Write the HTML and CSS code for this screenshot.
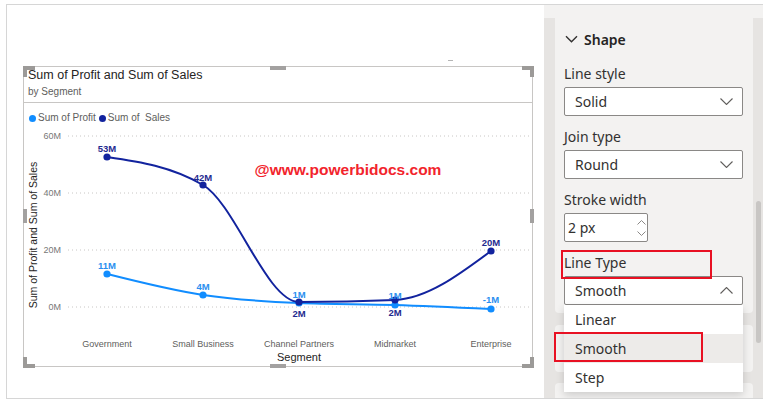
FILE: index.html
```html
<!DOCTYPE html>
<html>
<head>
<meta charset="utf-8">
<title>Line chart format</title>
<link rel="stylesheet" href="styles.css">
</head>
<body>
<div class="frame">
  <div class="canvas">
    <div class="visual">
      <span class="tick-mark"></span>
      <div class="vheader">
        <div class="vtitle">Sum of Profit and Sum of Sales</div>
        <div class="vsub">by Segment</div>
      </div>
      <div class="legend">
        <span class="lg-item"><span class="dot profit"></span>Sum of Profit</span>
        <span class="lg-item"><span class="dot sales"></span>Sum of&nbsp; Sales</span>
      </div>
      <svg class="chart" viewBox="24 125 508 241" width="508" height="241">
        <g class="grid">
          <line x1="68" x2="529" y1="136" y2="136"/>
          <line x1="68" x2="529" y1="193" y2="193"/>
          <line x1="68" x2="529" y1="250" y2="250"/>
          <line x1="68" x2="529" y1="307" y2="307"/>
        </g>
        <g class="ylab">
          <text x="61" y="139">60M</text>
          <text x="61" y="196">40M</text>
          <text x="61" y="253">20M</text>
          <text x="61" y="310">0M</text>
        </g>
        <g class="xlab">
          <text x="107" y="347">Government</text>
          <text x="203" y="347">Small Business</text>
          <text x="299" y="347">Channel Partners</text>
          <text x="395" y="347">Midmarket</text>
          <text x="491" y="347">Enterprise</text>
        </g>
        <text class="ytitle" transform="translate(36.5 235) rotate(-90)">Sum of Profit and Sum of Sales</text>
        <text class="xtitle" x="299" y="361">Segment</text>
        <text class="wm" x="348" y="175">@www.powerbidocs.com</text>

        <path class="ln-profit" d="M107,274 C139,282.08 171,290.17 203,295 C235,299.83 267,301.67 299,303 C331,304.33 363,304 395,305 C427,306 459,307.5 491,309"/>
        <g class="pt-profit">
          <circle cx="107" cy="274" r="3.6"/>
          <circle cx="203" cy="295" r="3.6"/>
          <circle cx="299" cy="303" r="3.6"/>
          <circle cx="395" cy="305" r="3.6"/>
          <circle cx="491" cy="309" r="3.6"/>
        </g>
        <path class="ln-sales" d="M107,157 C139,161.67 171,166.33 203,185 C235,203.67 267,302 299,302 C331,302 363,301.33 395,300 C427,298.67 459,274.83 491,251"/>
        <g class="pt-sales">
          <circle cx="107" cy="157" r="3.6"/>
          <circle cx="203" cy="185" r="3.6"/>
          <circle cx="299" cy="302" r="3.6"/>
          <circle cx="395" cy="300" r="3.6"/>
          <circle cx="491" cy="251" r="3.6"/>
        </g>
        <g class="lb-sales">
          <text x="107" y="152">53M</text>
          <text x="203" y="181">42M</text>
          <text x="299" y="317">2M</text>
          <text x="395" y="316">2M</text>
          <text x="491" y="246">20M</text>
        </g>
        <g class="lb-profit">
          <text x="107" y="269">11M</text>
          <text x="203" y="290">4M</text>
          <text x="299" y="298">1M</text>
          <text x="395" y="299">1M</text>
          <text x="491" y="303">-1M</text>
        </g>
      </svg>
      <span class="hc h-tl"></span>
      <span class="hc h-tr"></span>
      <span class="hc h-bl"></span>
      <span class="hc h-br"></span>
      <span class="hd h-t"></span>
      <span class="hd h-b"></span>
      <span class="hd h-l"></span>
      <span class="hd h-r"></span>
    </div>
  </div>

  <div class="pane">
    <div class="pane-top"></div>
    <div class="pane-body">
      <div class="cards">
        <div class="card card-first">
          <div class="sec-head">
            <svg class="chev" width="13" height="8" viewBox="0 0 13 8"><path d="M1 1.2 L6.5 6.7 L12 1.2"/></svg>
            <span>Shape</span>
          </div>
          <div class="field">
            <div class="flabel">Line style</div>
            <div class="select"><span>Solid</span><svg class="sel-chev" width="13" height="7" viewBox="0 0 13 7"><path d="M0.5 0.5 L6.5 6.5 L12.5 0.5"/></svg></div>
          </div>
          <div class="field">
            <div class="flabel">Join type</div>
            <div class="select"><span>Round</span><svg class="sel-chev" width="13" height="7" viewBox="0 0 13 7"><path d="M0.5 0.5 L6.5 6.5 L12.5 0.5"/></svg></div>
          </div>
          <div class="field">
            <div class="flabel">Stroke width</div>
            <div class="spin"><span>2 px</span>
              <span class="spin-btns">
                <svg class="spin-chev" width="9" height="5" viewBox="0 0 9 5"><path d="M0.5 4.5 L4.5 0.5 L8.5 4.5"/></svg>
                <svg class="spin-chev" width="9" height="5" viewBox="0 0 9 5"><path d="M0.5 0.5 L4.5 4.5 L8.5 0.5"/></svg>
              </span>
            </div>
          </div>
          <div class="field">
            <div class="flabel">Line Type</div>
            <div class="select"><span>Smooth</span><svg class="sel-chev" width="13" height="7" viewBox="0 0 13 7"><path d="M0.5 6.5 L6.5 0.5 L12.5 6.5"/></svg>
              <ul class="menu">
                <li>Linear</li>
                <li class="hover">Smooth</li>
                <li>Step</li>
              </ul>
            </div>
          </div>
        </div>
        <div class="card card-2"></div>
        <div class="card card-3"></div>
      </div>
      <div class="track"><div class="thumb"></div></div>
    </div>
    <span class="mark mark-1"></span>
    <span class="mark mark-2"></span>
  </div>
</div>
</body>
</html>
```

FILE: styles.css
```css
* { box-sizing: border-box; }
html, body { margin: 0; background: #fff; }
body { font-family: "Noto Sans", "Open Sans", sans-serif; color: #323130; }

.frame {
  display: flex;
  margin: 4px 4px 0 6px;
  height: 395px;
  border-top: 1px solid #d6d6d6;
  border-left: 1px solid #d6d6d6;
  border-bottom: 1px solid #d6d6d6;
}

/* report canvas */
.canvas { flex: 0 0 537px; background: #fff; padding: 61px 0 0 16px; }
.visual {
  position: relative;
  width: 510px;
  height: 301px;
  border: 1px solid #c8c6c4;
  font-family: "Liberation Sans", Arial, sans-serif;
}
.tick-mark { position: absolute; top: -7px; left: 424px; width: 5px; height: 1px; background: #b5b5b5; }
.vheader { height: 36px; border-bottom: 1px solid #c8c6c4; padding: 0 4px; }
.vtitle { font-size: 12.5px; line-height: 16px; color: #252423; }
.vsub { font-size: 10px; line-height: 14px; margin-top: 2px; color: #605e5c; }
.legend {
  height: 22px;
  padding: 8px 0 0 5px;
  display: flex;
  align-items: center;
  gap: 3px;
  font-size: 10px;
  line-height: 14px;
  color: #605e5c;
}
.lg-item { display: flex; align-items: center; gap: 2px; }
.dot { width: 7px; height: 7px; border-radius: 50%; }
.dot.profit { background: #118dff; }
.dot.sales { background: #12239e; }
.chart { display: block; }

.grid line { stroke: #c8c6c4; stroke-width: 1; stroke-dasharray: 1 3; }
.ylab text { font-size: 9px; fill: #777; text-anchor: end; }
.xlab text { font-size: 9px; fill: #605e5c; text-anchor: middle; }
.ytitle { font-size: 10.5px; fill: #252423; text-anchor: middle; }
.xtitle { font-size: 11px; fill: #252423; text-anchor: middle; }
.wm { font-size: 15.5px; font-weight: bold; fill: #f2242c; text-anchor: middle; }
.ln-profit { fill: none; stroke: #118dff; stroke-width: 2; }
.ln-sales { fill: none; stroke: #12239e; stroke-width: 2; }
.pt-profit circle { fill: #118dff; }
.pt-sales circle { fill: #12239e; }
.lb-sales text { font-size: 9.5px; font-weight: bold; fill: #1f2b8f; text-anchor: middle; }
.lb-profit text { font-size: 9.5px; font-weight: bold; fill: #2b8fef; text-anchor: middle; }

/* selection handles */
.hc { position: absolute; width: 12px; height: 11px; border: 0 solid #9c9a98; }
.h-tl { top: -1px; left: -1px; border-top-width: 4px; border-left-width: 4px; }
.h-tr { top: -1px; right: -2px; border-top-width: 4px; border-right-width: 4px; }
.h-bl { bottom: -2px; left: -1px; border-bottom-width: 4px; border-left-width: 4px; }
.h-br { bottom: -2px; right: -2px; border-bottom-width: 4px; border-right-width: 4px; }
.hd { position: absolute; background: #a3a1a0; }
.h-t { top: -1px; left: 246px; width: 16px; height: 4px; }
.h-b { bottom: -2px; left: 246px; width: 16px; height: 4px; }
.h-l { left: -1px; top: 142px; width: 4px; height: 14px; }
.h-r { right: -2px; top: 142px; width: 4px; height: 14px; }

/* format pane */
.pane {
  position: relative;
  flex: 0 0 219px;
  display: flex;
  flex-direction: column;
  overflow: hidden;
  background: #e6e4e2;
}
.pane-top { flex: none; height: 13px; background: #f3f2f1; }
.pane-body { flex: 1; min-height: 0; display: flex; padding-left: 11px; }
.cards { flex: none; width: 198px; }
.card { background: #f3f2f1; border-radius: 4px; }
.card-first { position: relative; z-index: 2; border-radius: 0 0 4px 4px; padding: 10px 10px 8px 9px; }
.card-2 { margin-top: 12px; height: 47px; }
.card-3 { margin-top: 11px; height: 40px; }
.track { flex: none; width: 10px; padding-left: 3px; }
.thumb { margin-top: 183px; width: 5px; height: 142px; background: #c8c6c4; border-radius: 3px; }

.sec-head {
  height: 22px;
  display: flex;
  align-items: center;
  gap: 6px;
  padding-left: 1px;
  margin-bottom: 15px;
  font-size: 14px;
  font-weight: 600;
  color: #252423;
}
.chev path { fill: none; stroke: #323130; stroke-width: 1.4; }
.field { margin-bottom: 12px; }
.field:last-child { margin-bottom: 0; }
.flabel { font-size: 14px; line-height: 18px; margin-bottom: 4px; color: #323130; }
.select {
  position: relative;
  height: 29px;
  border: 1px solid #8a8886;
  border-radius: 2px;
  background: #fff;
  display: flex;
  align-items: center;
  justify-content: space-between;
  padding: 0 9px 0 10px;
  font-size: 14px;
  color: #323130;
}
.sel-chev path { fill: none; stroke: #605e5c; stroke-width: 1.1; }
.spin {
  width: 84px;
  height: 29px;
  border: 1px solid #8a8886;
  border-radius: 2px;
  background: #fff;
  display: flex;
  align-items: center;
  justify-content: space-between;
  padding: 0 1px 0 3px;
  font-size: 14px;
}
.spin-btns { display: flex; flex-direction: column; gap: 6px; }
.spin-chev { display: block; }
.spin-chev path { fill: none; stroke: #8a8886; stroke-width: 1; }
.menu {
  position: absolute;
  left: -1px;
  top: calc(100% + 1px);
  width: 179px;
  margin: 0;
  padding: 0;
  list-style: none;
  background: #fff;
  box-shadow: 0 3px 8px rgba(0, 0, 0, 0.16);
}
.menu li { height: 29px; line-height: 29px; padding-left: 11px; }
.menu li.hover { background: #edebe9; }

.mark { position: absolute; border: 2px solid #e81123; z-index: 3; }
.mark-1 { left: 17px; top: 245px; width: 151px; height: 29px; }
.mark-2 { left: 10px; top: 327px; width: 149px; height: 30px; }
```
